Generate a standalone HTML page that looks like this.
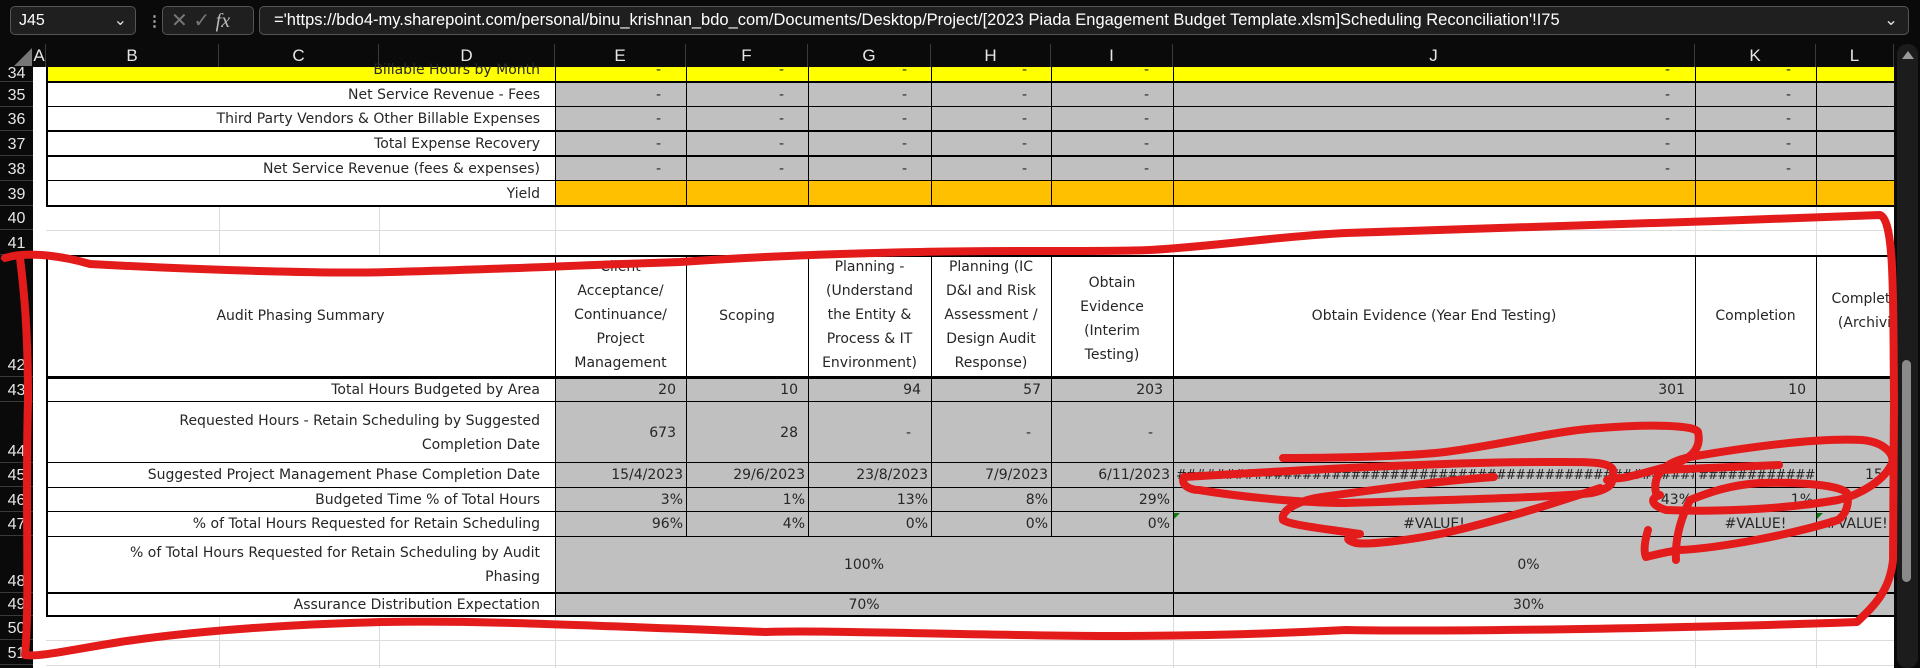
<!DOCTYPE html>
<html><head><meta charset="utf-8"><style>
*{margin:0;padding:0;box-sizing:border-box}
body{width:1920px;height:668px;background:#0a0a0a;position:relative;overflow:hidden;font-family:"DejaVu Sans","Liberation Sans",sans-serif;}
.a{position:absolute}
.t{position:absolute;font-size:14px;color:#262626;white-space:nowrap;display:flex;align-items:center;overflow:hidden}
.r{justify-content:flex-end}
.ctr{justify-content:center;text-align:center}
.hl{position:absolute;background:#000;height:2px}
.vl{position:absolute;background:#000;width:1px}
.g{background:#c0c0c0}
.rn{position:absolute;left:0;width:33px;color:#e6e6e6;font-size:16px;font-family:"Liberation Sans",sans-serif;display:flex;align-items:flex-end;justify-content:center;padding-bottom:1px;border-bottom:1px solid #3a3a3a}
.ch{position:absolute;top:44px;height:23px;color:#e6e6e6;font-size:17px;font-family:"Liberation Sans",sans-serif;display:flex;align-items:center;justify-content:center;border-right:1px solid #3a3a3a}
.hd{position:absolute;font-size:14px;color:#262626;text-align:center;line-height:24px;display:flex;align-items:center;justify-content:center;overflow:hidden}
</style></head><body>
<div class="a" style="left:10px;top:6px;width:126px;height:29px;border:1px solid #555;border-radius:5px;background:#1f1f1f;color:#fff;font:16px 'Liberation Sans',sans-serif;padding:5px 0 0 8px">J45<span style="position:absolute;right:8px;top:3px;color:#ddd">&#8964;</span></div>
<div class="a" style="left:147px;top:12px;color:#aaa;font:bold 15px 'Liberation Sans'">&#8942;</div>
<div class="a" style="left:162px;top:6px;width:92px;height:29px;border:1px solid #555;border-radius:5px;background:#1f1f1f;color:#777;font:20px 'Liberation Sans';padding:1px 0 0 8px">✕ ✓ <i style="font-family:'Liberation Serif';color:#bbb">fx</i></div>
<div class="a" style="left:259px;top:6px;width:1650px;height:29px;border:1px solid #555;border-radius:5px;background:#1f1f1f;color:#fff;font:16.5px 'Liberation Sans',sans-serif;padding:4px 0 0 14px;white-space:nowrap">='https://bdo4-my.sharepoint.com/personal/binu_krishnan_bdo_com/Documents/Desktop/Project/[2023 Piada Engagement Budget Template.xlsm]Scheduling Reconciliation'!I75<span style="position:absolute;right:10px;top:3px;color:#ddd">&#8964;</span></div>
<div class="a" style="left:14px;top:48px;width:0;height:0;border-left:18px solid transparent;border-bottom:18px solid #777"></div>
<div class="ch" style="left:33px;width:13px">A</div>
<div class="ch" style="left:46px;width:173px">B</div>
<div class="ch" style="left:219px;width:160px">C</div>
<div class="ch" style="left:379px;width:176px">D</div>
<div class="ch" style="left:555px;width:131px">E</div>
<div class="ch" style="left:686px;width:122px">F</div>
<div class="ch" style="left:808px;width:123px">G</div>
<div class="ch" style="left:931px;width:120px">H</div>
<div class="ch" style="left:1051px;width:122px">I</div>
<div class="ch" style="left:1173px;width:522px">J</div>
<div class="ch" style="left:1695px;width:121px">K</div>
<div class="ch" style="left:1816px;width:78px">L</div>
<div class="a" style="left:33px;top:67px;width:1861px;height:601px;background:#fff"></div>
<div class="a" style="left:46px;top:230px;width:1848px;height:1px;background:#dcdcdc"></div>
<div class="a" style="left:46px;top:640px;width:1848px;height:1px;background:#dcdcdc"></div>
<div class="a" style="left:46px;top:665px;width:1848px;height:1px;background:#dcdcdc"></div>
<div class="a" style="left:219px;top:206px;width:1px;height:49px;background:#dcdcdc"></div>
<div class="a" style="left:379px;top:206px;width:1px;height:49px;background:#dcdcdc"></div>
<div class="a" style="left:219px;top:616px;width:1px;height:52px;background:#dcdcdc"></div>
<div class="a" style="left:379px;top:616px;width:1px;height:52px;background:#dcdcdc"></div>
<div class="a" style="left:555px;top:206px;width:1px;height:49px;background:#dcdcdc"></div>
<div class="a" style="left:555px;top:616px;width:1px;height:52px;background:#dcdcdc"></div>
<div class="a" style="left:1173px;top:206px;width:1px;height:49px;background:#dcdcdc"></div>
<div class="a" style="left:1173px;top:616px;width:1px;height:52px;background:#dcdcdc"></div>
<div class="a" style="left:1695px;top:206px;width:1px;height:49px;background:#dcdcdc"></div>
<div class="a" style="left:1695px;top:616px;width:1px;height:52px;background:#dcdcdc"></div>
<div class="a" style="left:1816px;top:206px;width:1px;height:49px;background:#dcdcdc"></div>
<div class="a" style="left:1816px;top:616px;width:1px;height:52px;background:#dcdcdc"></div>
<div class="rn" style="top:67px;height:15px;align-items:center;overflow:hidden">34</div>
<div class="rn" style="top:82px;height:25px">35</div>
<div class="rn" style="top:107px;height:24px">36</div>
<div class="rn" style="top:131px;height:25px">37</div>
<div class="rn" style="top:156px;height:25px">38</div>
<div class="rn" style="top:181px;height:25px">39</div>
<div class="rn" style="top:206px;height:24px">40</div>
<div class="rn" style="top:230px;height:25px">41</div>
<div class="rn" style="top:255px;height:122px">42</div>
<div class="rn" style="top:377px;height:25px">43</div>
<div class="rn" style="top:402px;height:61px">44</div>
<div class="rn" style="top:463px;height:24px">45</div>
<div class="rn" style="top:487px;height:25px">46</div>
<div class="rn" style="top:512px;height:24px">47</div>
<div class="rn" style="top:536px;height:57px">48</div>
<div class="rn" style="top:593px;height:23px">49</div>
<div class="rn" style="top:616px;height:24px">50</div>
<div class="rn" style="top:640px;height:25px">51</div>

<div class="a" style="left:46px;top:67px;width:1848px;height:15px;background:#ffff00"></div>
<div class="a g" style="left:555px;top:82px;width:1339px;height:99px"></div>
<div class="a" style="left:555px;top:181px;width:1339px;height:25px;background:#ffc000"></div>
<div class="t r" style="left:46px;top:58px;width:509px;height:24px;padding-right:15px">Billable Hours by Month</div>
<div class="t r" style="left:46px;top:82px;width:509px;height:25px;padding-right:15px">Net Service Revenue - Fees</div>
<div class="t r" style="left:46px;top:107px;width:509px;height:24px;padding-right:15px">Third Party Vendors &amp; Other Billable Expenses</div>
<div class="t r" style="left:46px;top:131px;width:509px;height:25px;padding-right:15px">Total Expense Recovery</div>
<div class="t r" style="left:46px;top:156px;width:509px;height:25px;padding-right:15px">Net Service Revenue (fees &amp; expenses)</div>
<div class="t r" style="left:46px;top:181px;width:509px;height:25px;padding-right:15px">Yield</div>
<div class="hl" style="left:46px;top:81px;width:1848px"></div>
<div class="hl" style="left:46px;top:106px;width:1848px;height:1px"></div>
<div class="hl" style="left:46px;top:130px;width:1848px"></div>
<div class="hl" style="left:46px;top:155px;width:1848px"></div>
<div class="hl" style="left:46px;top:180px;width:1848px;height:1px"></div>
<div class="hl" style="left:46px;top:205px;width:1848px"></div>
<div class="vl" style="left:46px;top:67px;height:140px;width:2px"></div>
<div class="vl" style="left:555px;top:67px;height:140px"></div>
<div class="vl" style="left:686px;top:67px;height:140px"></div>
<div class="vl" style="left:808px;top:67px;height:140px"></div>
<div class="vl" style="left:931px;top:67px;height:140px"></div>
<div class="vl" style="left:1051px;top:67px;height:140px"></div>
<div class="vl" style="left:1173px;top:67px;height:140px"></div>
<div class="vl" style="left:1695px;top:67px;height:140px"></div>
<div class="vl" style="left:1816px;top:67px;height:140px"></div>
<div style="position:absolute;left:0;top:0">
<div class="t" style="left:656px;top:60px;height:20px">-</div><div class="t" style="left:779px;top:60px;height:20px">-</div><div class="t" style="left:902px;top:60px;height:20px">-</div><div class="t" style="left:1022px;top:60px;height:20px">-</div><div class="t" style="left:1144px;top:60px;height:20px">-</div><div class="t" style="left:1665px;top:60px;height:20px">-</div><div class="t" style="left:1786px;top:60px;height:20px">-</div>
<div class="t" style="left:656px;top:82px;height:25px">-</div><div class="t" style="left:779px;top:82px;height:25px">-</div><div class="t" style="left:902px;top:82px;height:25px">-</div><div class="t" style="left:1022px;top:82px;height:25px">-</div><div class="t" style="left:1144px;top:82px;height:25px">-</div><div class="t" style="left:1665px;top:82px;height:25px">-</div><div class="t" style="left:1786px;top:82px;height:25px">-</div>
<div class="t" style="left:656px;top:107px;height:24px">-</div><div class="t" style="left:779px;top:107px;height:24px">-</div><div class="t" style="left:902px;top:107px;height:24px">-</div><div class="t" style="left:1022px;top:107px;height:24px">-</div><div class="t" style="left:1144px;top:107px;height:24px">-</div><div class="t" style="left:1665px;top:107px;height:24px">-</div><div class="t" style="left:1786px;top:107px;height:24px">-</div>
<div class="t" style="left:656px;top:131px;height:25px">-</div><div class="t" style="left:779px;top:131px;height:25px">-</div><div class="t" style="left:902px;top:131px;height:25px">-</div><div class="t" style="left:1022px;top:131px;height:25px">-</div><div class="t" style="left:1144px;top:131px;height:25px">-</div><div class="t" style="left:1665px;top:131px;height:25px">-</div><div class="t" style="left:1786px;top:131px;height:25px">-</div>
<div class="t" style="left:656px;top:156px;height:25px">-</div><div class="t" style="left:779px;top:156px;height:25px">-</div><div class="t" style="left:902px;top:156px;height:25px">-</div><div class="t" style="left:1022px;top:156px;height:25px">-</div><div class="t" style="left:1144px;top:156px;height:25px">-</div><div class="t" style="left:1665px;top:156px;height:25px">-</div><div class="t" style="left:1786px;top:156px;height:25px">-</div>
</div>

<div class="a g" style="left:555px;top:377px;width:1339px;height:239px"></div>
<div class="hd" style="left:46px;top:255px;width:509px;height:122px">Audit Phasing Summary</div>
<div class="hd" style="left:555px;top:250px;width:131px;height:127px;align-items:flex-end;padding-bottom:2px">Client<br>Acceptance/<br>Continuance/<br>Project<br>Management</div>
<div class="hd" style="left:686px;top:255px;width:122px;height:122px">Scoping</div>
<div class="hd" style="left:808px;top:255px;width:123px;height:122px;align-items:flex-end;padding-bottom:2px">Planning -<br>(Understand<br>the Entity &amp;<br>Process &amp; IT<br>Environment)</div>
<div class="hd" style="left:931px;top:255px;width:120px;height:122px;align-items:flex-end;padding-bottom:2px">Planning (IC<br>D&amp;I and Risk<br>Assessment /<br>Design Audit<br>Response)</div>
<div class="hd" style="left:1051px;top:255px;width:122px;height:122px;padding-top:6px">Obtain<br>Evidence<br>(Interim<br>Testing)</div>
<div class="hd" style="left:1173px;top:255px;width:522px;height:122px">Obtain Evidence (Year End Testing)</div>
<div class="hd" style="left:1695px;top:255px;width:121px;height:122px">Completion</div>
<div class="hd" style="left:1816px;top:255px;width:78px;height:112px;justify-content:flex-start;padding-left:13px;text-align:center">Completion<br>&nbsp;&nbsp;(Archiving)</div>

<div class="t r" style="left:46px;top:377px;width:509px;height:25px;padding-right:15px">Total Hours Budgeted by Area</div>
<div class="t r" style="left:46px;top:402px;width:509px;height:61px;padding-right:15px;white-space:normal;text-align:right;line-height:24px">Requested Hours - Retain Scheduling by Suggested<br>Completion Date</div>
<div class="t r" style="left:46px;top:463px;width:509px;height:24px;padding-right:15px">Suggested Project Management Phase Completion Date</div>
<div class="t r" style="left:46px;top:487px;width:509px;height:25px;padding-right:15px">Budgeted Time % of Total Hours</div>
<div class="t r" style="left:46px;top:512px;width:509px;height:24px;padding-right:15px">% of Total Hours Requested for Retain Scheduling</div>
<div class="t r" style="left:46px;top:536px;width:509px;height:57px;padding-right:15px;text-align:right;line-height:24px">% of Total Hours Requested for Retain Scheduling by Audit<br>Phasing</div>
<div class="t r" style="left:46px;top:593px;width:509px;height:23px;padding-right:15px">Assurance Distribution Expectation</div>

<div class="t r" style="left:555px;top:377px;width:131px;height:25px;padding-right:10px">20</div>
<div class="t r" style="left:686px;top:377px;width:122px;height:25px;padding-right:10px">10</div>
<div class="t r" style="left:808px;top:377px;width:123px;height:25px;padding-right:10px">94</div>
<div class="t r" style="left:931px;top:377px;width:120px;height:25px;padding-right:10px">57</div>
<div class="t r" style="left:1051px;top:377px;width:122px;height:25px;padding-right:10px">203</div>
<div class="t r" style="left:1173px;top:377px;width:522px;height:25px;padding-right:10px">301</div>
<div class="t r" style="left:1695px;top:377px;width:121px;height:25px;padding-right:10px">10</div>
<div class="t r" style="left:555px;top:402px;width:131px;height:61px;padding-right:10px">673</div>
<div class="t r" style="left:686px;top:402px;width:122px;height:61px;padding-right:10px">28</div>
<div class="t r" style="left:808px;top:402px;width:123px;height:61px;padding-right:20px">-</div>
<div class="t r" style="left:931px;top:402px;width:120px;height:61px;padding-right:20px">-</div>
<div class="t r" style="left:1051px;top:402px;width:122px;height:61px;padding-right:20px">-</div>
<div class="t r" style="left:555px;top:463px;width:131px;height:24px;padding-right:3px">15/4/2023</div>
<div class="t r" style="left:686px;top:463px;width:122px;height:24px;padding-right:3px">29/6/2023</div>
<div class="t r" style="left:808px;top:463px;width:123px;height:24px;padding-right:3px">23/8/2023</div>
<div class="t r" style="left:931px;top:463px;width:120px;height:24px;padding-right:3px">7/9/2023</div>
<div class="t r" style="left:1051px;top:463px;width:122px;height:24px;padding-right:3px">6/11/2023</div>
<div class="t" style="left:1176px;top:463px;width:518px;height:24px;font-size:13px;letter-spacing:-1.2px">####################################################################</div>
<div class="t" style="left:1698px;top:463px;width:117px;height:24px;font-size:13px;letter-spacing:-1.2px">#################</div>
<div class="t" style="left:1865px;top:463px;width:29px;height:24px">15/</div>
<div class="t r" style="left:555px;top:487px;width:131px;height:25px;padding-right:3px">3%</div>
<div class="t r" style="left:686px;top:487px;width:122px;height:25px;padding-right:3px">1%</div>
<div class="t r" style="left:808px;top:487px;width:123px;height:25px;padding-right:3px">13%</div>
<div class="t r" style="left:931px;top:487px;width:120px;height:25px;padding-right:3px">8%</div>
<div class="t r" style="left:1051px;top:487px;width:122px;height:25px;padding-right:3px">29%</div>
<div class="t r" style="left:1173px;top:487px;width:522px;height:25px;padding-right:3px">43%</div>
<div class="t r" style="left:1695px;top:487px;width:121px;height:25px;padding-right:3px">1%</div>
<div class="t r" style="left:555px;top:512px;width:131px;height:24px;padding-right:3px">96%</div>
<div class="t r" style="left:686px;top:512px;width:122px;height:24px;padding-right:3px">4%</div>
<div class="t r" style="left:808px;top:512px;width:123px;height:24px;padding-right:3px">0%</div>
<div class="t r" style="left:931px;top:512px;width:120px;height:24px;padding-right:3px">0%</div>
<div class="t r" style="left:1051px;top:512px;width:122px;height:24px;padding-right:3px">0%</div>
<div class="t ctr" style="left:1173px;top:512px;width:522px;height:24px">#VALUE!</div>
<div class="t ctr" style="left:1695px;top:512px;width:121px;height:24px">#VALUE!</div>
<div class="t" style="left:1826px;top:512px;width:68px;height:24px">#VALUE!</div>
<div class="a" style="left:1174px;top:513px;width:0;height:0;border-top:6px solid #0a7a0a;border-right:6px solid transparent"></div>
<div class="a" style="left:1817px;top:513px;width:0;height:0;border-top:6px solid #0a7a0a;border-right:6px solid transparent"></div>
<div class="t ctr" style="left:555px;top:536px;width:618px;height:57px">100%</div>
<div class="t ctr" style="left:1173px;top:536px;width:721px;height:57px;padding-right:10px">0%</div>
<div class="t ctr" style="left:555px;top:593px;width:618px;height:23px">70%</div>
<div class="t ctr" style="left:1173px;top:593px;width:721px;height:23px;padding-right:10px">30%</div>

<div class="hl" style="left:46px;top:255px;width:1848px"></div>
<div class="hl" style="left:46px;top:376px;width:1848px;height:3px"></div>
<div class="hl" style="left:46px;top:401px;width:1848px;height:1px"></div>
<div class="hl" style="left:46px;top:462px;width:1848px;height:1px"></div>
<div class="hl" style="left:46px;top:487px;width:1848px;height:1px"></div>
<div class="hl" style="left:46px;top:511px;width:1848px;height:1px"></div>
<div class="hl" style="left:46px;top:536px;width:1848px;height:1px"></div>
<div class="hl" style="left:46px;top:592px;width:1848px;height:2px"></div>
<div class="hl" style="left:46px;top:615px;width:1848px;height:2px"></div>
<div class="vl" style="left:46px;top:255px;height:362px;width:2px"></div>
<div class="vl" style="left:555px;top:255px;height:362px"></div>
<div class="vl" style="left:686px;top:255px;height:281px"></div>
<div class="vl" style="left:808px;top:255px;height:281px"></div>
<div class="vl" style="left:931px;top:255px;height:281px"></div>
<div class="vl" style="left:1051px;top:255px;height:281px"></div>
<div class="vl" style="left:1173px;top:255px;height:362px"></div>
<div class="vl" style="left:1695px;top:255px;height:281px"></div>
<div class="vl" style="left:1816px;top:255px;height:281px"></div>

<div class="a" style="left:1894px;top:44px;width:26px;height:624px;background:#0a0a0a"></div>
<div class="a" style="left:1897px;top:44px;width:21px;height:624px;background:#1c1c1c;border-radius:10px"></div>
<div class="a" style="left:1902px;top:51px;width:0;height:0;border-left:6px solid transparent;border-right:6px solid transparent;border-bottom:8px solid #9a9a9a"></div>
<div class="a" style="left:1902px;top:360px;width:9px;height:222px;background:#8a8a8a;border-radius:5px"></div>

<svg class="a" style="left:0;top:0" width="1920" height="668" viewBox="0 0 1920 668">
<g fill="none" stroke="#e31b1b" stroke-width="8" stroke-linecap="round" stroke-linejoin="round">
<path d="M5 258 C30 250,70 258,90 264 C200 270,330 274,390 272 C480 270,560 266,680 262 C780 255,860 253,920 252 C1000 250,1100 252,1150 250 C1220 246,1280 236,1346 233 C1500 228,1700 222,1880 215 C1895 220,1893 300,1894 400 L1893 560 C1890 590,1875 605,1857 622 C1700 628,1450 632,1346 630 C1250 635,1150 636,1100 636 C950 635,830 630,765 632 C600 626,480 620,383 622 C300 624,200 630,120 642 C70 650,40 657,25 655 C30 600,25 500,28 400 C28 330,24 290,20 258"/>
<path d="M1283 458 C1360 458,1420 455,1445 452 C1500 445,1560 430,1600 428 C1650 424,1695 425,1698 432 C1702 450,1690 460,1666 467 C1640 474,1620 480,1612 478"/>
<path d="M1612 477 C1620 460,1590 462,1543 462 C1450 462,1300 470,1184 477 C1180 485,1190 490,1199 490 C1260 500,1320 503,1346 503 C1450 500,1560 497,1592 493 C1615 488,1615 478,1607 480"/>
<path d="M1600 488 C1550 505,1500 520,1445 533 C1410 540,1370 545,1356 543 C1345 540,1345 537,1360 534 C1320 528,1290 525,1283 520 C1280 510,1300 500,1322 497 C1400 486,1450 480,1494 477"/>
<path d="M1779 465 C1740 467,1700 468,1661 470"/>
<path d="M1656 493 C1652 475,1665 462,1690 457 C1760 445,1820 438,1862 440 C1885 442,1895 455,1892 463 C1885 480,1860 495,1838 500 C1780 510,1710 512,1666 510 C1650 505,1650 498,1660 495"/>
<path d="M1690 500 C1710 492,1730 485,1760 483 C1800 482,1840 485,1847 493 C1850 505,1845 515,1838 520 C1790 535,1720 548,1680 550 C1665 552,1650 556,1646 557 C1643 550,1645 540,1648 530"/>
<path d="M1690 500 C1680 520,1675 540,1676 560"/>
</g></svg>
</body></html>
